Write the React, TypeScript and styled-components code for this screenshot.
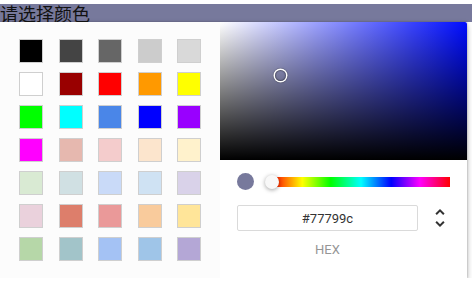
import React from 'react';
import styled, { createGlobalStyle } from 'styled-components';

const GlobalStyle = createGlobalStyle`
   html, body {
      margin: 0;
      padding: 0;
      background: #ffffff;
   }
   body {
      font-family: Roboto, "Liberation Sans", sans-serif;
   }
`;

const SWATCHES = [
   ['#000000', '#444444', '#666666', '#cccccc', '#d9d9d9'],
   ['#ffffff', '#990000', '#ff0000', '#ff9900', '#ffff00'],
   ['#00ff00', '#00ffff', '#4a86e8', '#0000ff', '#9900ff'],
   ['#ff00ff', '#e6b8af', '#f4cccc', '#fce5cd', '#fff2cc'],
   ['#d9ead3', '#d0e0e3', '#c9daf8', '#cfe2f3', '#d9d2e9'],
   ['#ead1dc', '#dd7e6b', '#ea9999', '#f9cb9c', '#ffe599'],
   ['#b6d7a8', '#a2c4c9', '#a4c2f4', '#9fc5e8', '#b4a7d6'],
];

const current = { hex: '#77799c', hue: 237, s: 0.237, v: 0.612 };

const Page = styled.div`
   padding-top: 4px;
`;

const Trigger = styled.div<{ $color: string }>`
   height: 18px;
   line-height: 18px;
   background: ${(p) => p.$color};
   color: #111;
   font-family: "Noto Sans CJK SC", sans-serif;
   font-size: 18px;
   white-space: nowrap;
`;

const Popup = styled.div`
   display: flex;
   width: 467px;
   height: 256px;
   background: #fff;
   box-shadow: 0 0 2px rgba(0, 0, 0, 0.25), 0 3px 6px rgba(0, 0, 0, 0.3);
`;

const SwatchPanel = styled.div`
   width: 220px;
   box-sizing: border-box;
   padding: 17px 19px 16px;
   background: #fcfcfc;
   display: grid;
   grid-template-columns: repeat(5, 24px);
   grid-auto-rows: 24px;
   justify-content: space-between;
   row-gap: 9px;
   align-content: start;
`;

const Swatch = styled.div<{ $color: string }>`
   box-sizing: border-box;
   width: 24px;
   height: 24px;
   border: 1px solid #cfcfcf;
   background: ${(p) => p.$color};
   cursor: pointer;
`;

const Chrome = styled.div`
   width: 247px;
   display: flex;
   flex-direction: column;
   background: #fff;
`;

const Saturation = styled.div<{ $hue: number }>`
   position: relative;
   height: 138px;
   border-radius: 2px 2px 0 0;
   overflow: hidden;
   background:
      linear-gradient(to top, #000, rgba(0, 0, 0, 0)),
      linear-gradient(to right, #fff, rgba(255, 255, 255, 0)),
      hsl(${(p) => p.$hue}, 100%, 50%);
`;

const SatPointer = styled.div`
   position: absolute;
   width: 11px;
   height: 11px;
   border-radius: 50%;
   transform: translate(-6px, -6px);
   box-shadow: 0 0 0 1.5px #fff, inset 0 0 1px 1px rgba(0, 0, 0, 0.3), 0 0 1px 2px rgba(0, 0, 0, 0.3);
`;

const Body = styled.div`
   padding: 13px 17px 0 17px;
   display: flex;
   flex-direction: column;
`;

const Controls = styled.div`
   display: flex;
   align-items: center;
   height: 17px;
`;

const Preview = styled.div<{ $color: string }>`
   width: 17px;
   height: 17px;
   border-radius: 50%;
   background: ${(p) => p.$color};
   flex: none;
`;

const Hue = styled.div`
   position: relative;
   flex: 1;
   height: 10px;
   margin-left: 18px;
   background: linear-gradient(
      to right,
      #f00 0%,
      #ff0 17%,
      #0f0 33%,
      #0ff 50%,
      #00f 67%,
      #f0f 83%,
      #f00 100%
   );
`;

const HueThumb = styled.div`
   position: absolute;
   top: -2px;
   width: 14px;
   height: 14px;
   border-radius: 50%;
   background: #f8f8f8;
   transform: translateX(-7px);
   box-shadow: 0 1px 4px 0 rgba(0, 0, 0, 0.37);
`;

const Fields = styled.div`
   display: flex;
   margin-top: 15px;
`;

const FieldColumn = styled.div`
   width: 181px;
   display: flex;
   flex-direction: column;
   align-items: center;
`;

const HexInput = styled.input`
   box-sizing: border-box;
   width: 181px;
   height: 26px;
   border: 1px solid #dadada;
   border-radius: 2px;
   box-shadow: none;
   outline: none;
   text-align: center;
   font-family: Roboto, "Liberation Sans", sans-serif;
   font-size: 13px;
   color: #333;
   padding: 0;
`;

const Label = styled.div`
   margin-top: 12px;
   font-size: 13px;
   line-height: 13px;
   color: #969696;
   text-transform: uppercase;
`;

const Toggle = styled.div`
   flex: 1;
   display: flex;
   justify-content: flex-end;
   margin-right: -2px;
   padding-top: 1px;
   height: 24px;
`;

function ToggleIcon() {
   return (
      <svg width="24" height="24" viewBox="0 0 24 24">
         <path fill="#333" d="M12,5.83L15.17,9L16.58,7.59L12,3L7.41,7.59L8.83,9L12,5.83Z" />
         <path fill="#333" d="M12,18.17L8.83,15L7.42,16.41L12,21L16.59,16.41L15.17,15L12,18.17Z" />
      </svg>
   );
}

export default function App() {
   return (
      <Page>
         <GlobalStyle />
         <Trigger $color={current.hex}>请选择颜色</Trigger>
         <Popup>
            <SwatchPanel>
               {SWATCHES.flat().map((c, i) => (
                  <Swatch key={i} $color={c} title={c} />
               ))}
            </SwatchPanel>
            <Chrome>
               <Saturation $hue={current.hue}>
                  <SatPointer style={{ left: `${current.s * 100 + 1}%`, top: `${(1 - current.v) * 100}%` }} />
               </Saturation>
               <Body>
                  <Controls>
                     <Preview $color={current.hex} />
                     <Hue>
                        <HueThumb style={{ left: '0%' }} />
                     </Hue>
                  </Controls>
                  <Fields>
                     <FieldColumn>
                        <HexInput value={current.hex} readOnly />
                        <Label>hex</Label>
                     </FieldColumn>
                     <Toggle>
                        <ToggleIcon />
                     </Toggle>
                  </Fields>
               </Body>
            </Chrome>
         </Popup>
      </Page>
   );
}
